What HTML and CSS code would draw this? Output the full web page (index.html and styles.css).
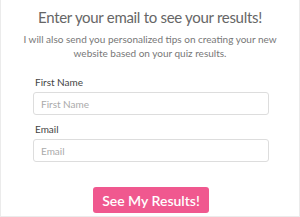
FILE: index.html
```html
<!DOCTYPE html>
<html lang="en">
<head>
    <meta charset="UTF-8">
    <title>See Your Results</title>
    <link rel="stylesheet" href="styles.css">
</head>
<body>
    <div class="panel">
        <h1>Enter your email to see your results!</h1>
        <p class="intro">I will also send you personalized tips on creating your new website based on your quiz results.</p>

        <form class="signup">
            <label for="firstName">First Name</label>
            <input type="text" id="firstName" placeholder="First Name">
            <label for="email">Email</label>
            <input type="text" id="email" placeholder="Email">
            <button type="submit">See My Results!</button>
        </form>
    </div>
</body>
</html>
```

FILE: styles.css
```css
body {
    margin: 0;
    padding: 0;
    background: #fff;
    font-family: Lato, Arial, sans-serif;
}

.panel {
    width: 300px;
    height: 217px;
    box-sizing: border-box;
    border: 1px solid #ebebeb;
    border-top: none;
    text-align: center;
    overflow: hidden;
}

h1 {
    margin: 7px 0 0;
    font-size: 15px;
    line-height: 20px;
    font-weight: 400;
    letter-spacing: -0.3px;
    color: #666;
    white-space: nowrap;
}

.intro {
    margin: 5px auto 0;
    width: 256px;
    font-size: 10px;
    line-height: 14px;
    color: #777;
}

.signup {
    display: flex;
    flex-direction: column;
    align-items: flex-start;
    padding: 0 30px 0 32px;
    margin-top: 15px;
}

label {
    font-size: 10px;
    line-height: 14px;
    color: #444;
    margin: 0 0 3px 2px;
}

input {
    width: 236px;
    height: 23px;
    box-sizing: border-box;
    border: 1px solid #ddd;
    border-radius: 3px;
    padding: 0 7px;
    margin: 0 0 7px;
    font-family: inherit;
    font-size: 10px;
    color: #555;
}

input::placeholder {
    color: #aaa;
}

button {
    align-self: center;
    margin-top: 18px;
    width: 116px;
    height: 26px;
    border: none;
    border-radius: 3px;
    background: #f0588f;
    color: #fff;
    font-family: inherit;
    font-size: 14px;
    font-weight: 600;
    white-space: nowrap;
    cursor: pointer;
}
```
